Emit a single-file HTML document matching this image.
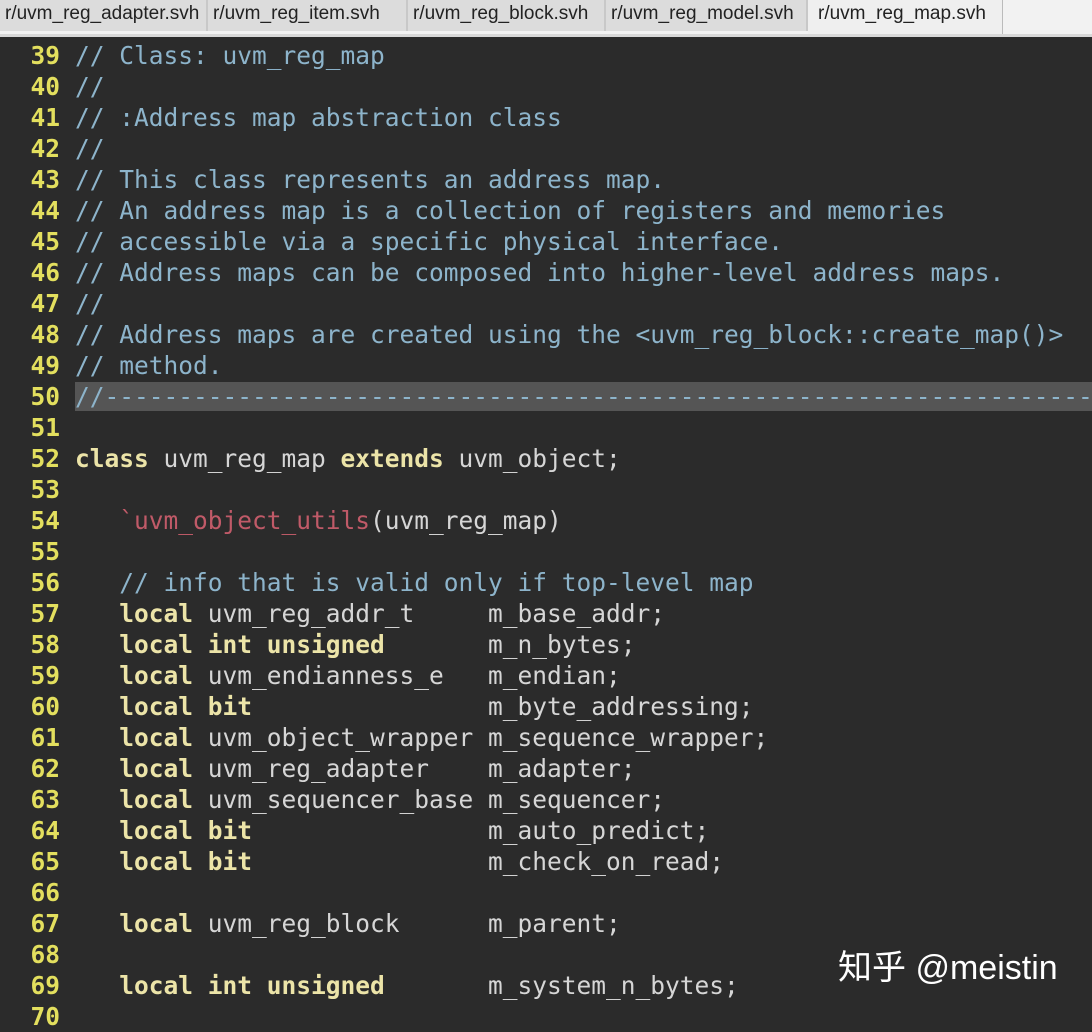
<!DOCTYPE html>
<html><head><meta charset="utf-8"><style>
html,body{margin:0;padding:0;width:1092px;height:1010px;overflow:hidden;background:#2b2b2b}
.tabs{position:absolute;left:0;top:0;width:1092px;height:34px;background:#f2f2f2;border-bottom:3px solid #d8d8d8;}
.tab{position:absolute;top:0;height:31px;background:#dcdcdc;border-right:2px solid #c8c8c8;font:19px "Liberation Sans",sans-serif;color:#222;line-height:28px;padding-left:5px;box-sizing:border-box;white-space:nowrap;overflow:hidden}
.tab.a{background:#efefef;border-right:1px solid #bbb;height:34px;padding-left:10px}
.code{position:absolute;left:0;top:40px;width:1092px;font-family:"DejaVu Sans Mono","Liberation Mono",monospace;font-size:24.5px;line-height:31px;color:#d6d6d6}
.l{height:31px;white-space:pre;position:relative}
.n{display:inline-block;width:60px;text-align:right;color:#e3df5e;font-weight:bold;margin-right:15px}
.c{color:#8db4cb}
.k{color:#ece4a8;font-weight:bold}
.m{color:#c05a68}
.hl{background:#555555}
.wm{position:absolute;left:838px;top:940px;font:34px "Liberation Sans","Noto Sans CJK SC",sans-serif;color:#fff}
</style></head><body>
<div class="tabs">
<div class="tab" style="left:0;width:208px">r/uvm_reg_adapter.svh</div>
<div class="tab" style="left:208px;width:200px">r/uvm_reg_item.svh</div>
<div class="tab" style="left:408px;width:198px">r/uvm_reg_block.svh</div>
<div class="tab" style="left:606px;width:202px">r/uvm_reg_model.svh</div>
<div class="tab a" style="left:808px;width:195px">r/uvm_reg_map.svh</div>
</div>
<div class="code">
<div class="l"><span class="n">39</span><span class="c">// Class: uvm_reg_map</span></div>
<div class="l"><span class="n">40</span><span class="c">//</span></div>
<div class="l"><span class="n">41</span><span class="c">// :Address map abstraction class</span></div>
<div class="l"><span class="n">42</span><span class="c">//</span></div>
<div class="l"><span class="n">43</span><span class="c">// This class represents an address map.</span></div>
<div class="l"><span class="n">44</span><span class="c">// An address map is a collection of registers and memories</span></div>
<div class="l"><span class="n">45</span><span class="c">// accessible via a specific physical interface.</span></div>
<div class="l"><span class="n">46</span><span class="c">// Address maps can be composed into higher-level address maps.</span></div>
<div class="l"><span class="n">47</span><span class="c">//</span></div>
<div class="l"><span class="n">48</span><span class="c">// Address maps are created using the &lt;uvm_reg_block::create_map()&gt;</span></div>
<div class="l"><span class="n">49</span><span class="c">// method.</span></div>
<div class="l"><span class="n">50</span><span class="c hl">//-------------------------------------------------------------------</span></div>
<div class="l"><span class="n">51</span></div>
<div class="l"><span class="n">52</span><span class="k">class</span> uvm_reg_map <span class="k">extends</span> uvm_object;</div>
<div class="l"><span class="n">53</span></div>
<div class="l"><span class="n">54</span>   <span class="m">`uvm_object_utils</span>(uvm_reg_map)</div>
<div class="l"><span class="n">55</span></div>
<div class="l"><span class="n">56</span>   <span class="c">// info that is valid only if top-level map</span></div>
<div class="l"><span class="n">57</span>   <span class="k">local</span> uvm_reg_addr_t     m_base_addr;</div>
<div class="l"><span class="n">58</span>   <span class="k">local int unsigned</span>       m_n_bytes;</div>
<div class="l"><span class="n">59</span>   <span class="k">local</span> uvm_endianness_e   m_endian;</div>
<div class="l"><span class="n">60</span>   <span class="k">local bit</span>                m_byte_addressing;</div>
<div class="l"><span class="n">61</span>   <span class="k">local</span> uvm_object_wrapper m_sequence_wrapper;</div>
<div class="l"><span class="n">62</span>   <span class="k">local</span> uvm_reg_adapter    m_adapter;</div>
<div class="l"><span class="n">63</span>   <span class="k">local</span> uvm_sequencer_base m_sequencer;</div>
<div class="l"><span class="n">64</span>   <span class="k">local bit</span>                m_auto_predict;</div>
<div class="l"><span class="n">65</span>   <span class="k">local bit</span>                m_check_on_read;</div>
<div class="l"><span class="n">66</span></div>
<div class="l"><span class="n">67</span>   <span class="k">local</span> uvm_reg_block      m_parent;</div>
<div class="l"><span class="n">68</span></div>
<div class="l"><span class="n">69</span>   <span class="k">local int unsigned</span>       m_system_n_bytes;</div>
<div class="l"><span class="n">70</span></div>
</div>
<div class="wm">知乎 @meistin</div>
</body></html>
